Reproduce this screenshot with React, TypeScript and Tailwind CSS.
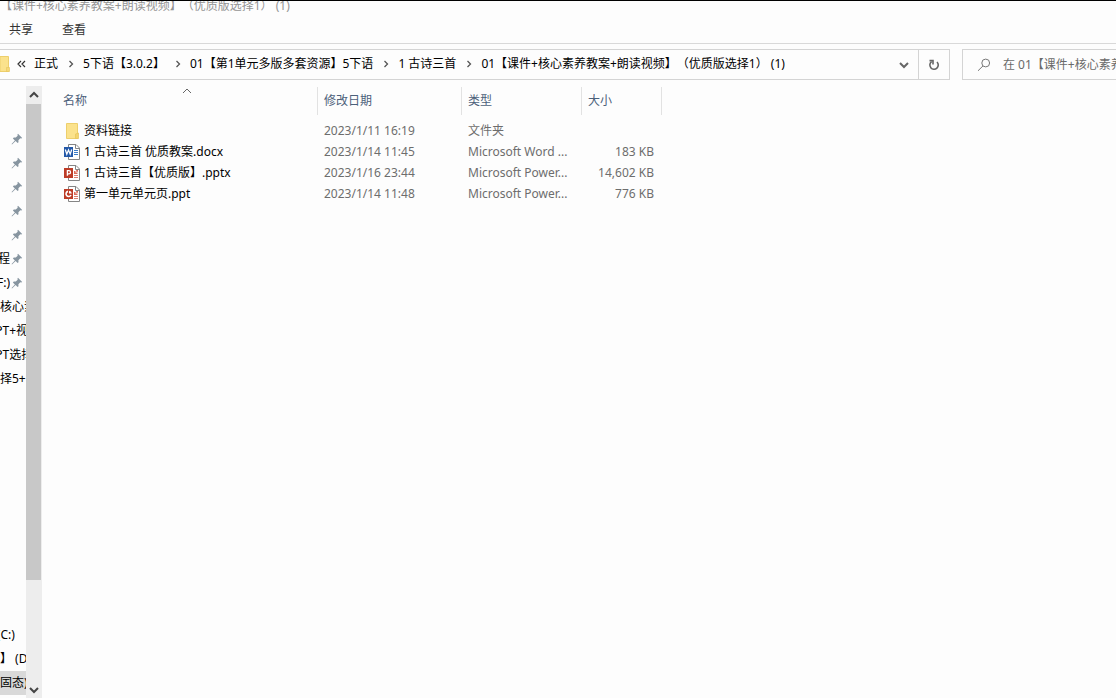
import type { ReactNode } from 'react';

type FileKind = 'folder' | 'word' | 'pptx' | 'ppt';

const crumbs = [
  '正式',
  '5下语【3.0.2】',
  '01【第1单元多版多套资源】5下语',
  '1 古诗三首',
  '01【课件+核心素养教案+朗读视频】（优质版选择1） (1)',
];

const files: { kind: FileKind; name: string; date: string; type: string; size: string }[] = [
  { kind: 'folder', name: '资料链接', date: '2023/1/11 16:19', type: '文件夹', size: '' },
  { kind: 'word', name: '1 古诗三首 优质教案.docx', date: '2023/1/14 11:45', type: 'Microsoft Word ...', size: '183 KB' },
  { kind: 'pptx', name: '1 古诗三首【优质版】.pptx', date: '2023/1/16 23:44', type: 'Microsoft Power...', size: '14,602 KB' },
  { kind: 'ppt', name: '第一单元单元页.ppt', date: '2023/1/14 11:48', type: 'Microsoft Power...', size: '776 KB' },
];

const pinned = ['', '', '', '', '', '方程', 'F:)'];
const recent = ['】核心素', 'PPT+视', 'PPT选择', '选择5+'];
const drives = ['s (C:)', '统】 (D:)', '新固态)'];

function Chevron({ dir, className }: { dir: 'up' | 'down' | 'right'; className: string }) {
  const d = { up: 'M1 6 L5 2 L9 6', down: 'M1 2 L5 6 L9 2', right: 'M3.5 1 L6.5 4 L3.5 7' }[dir];
  return (
    <svg viewBox="0 0 10 8" className={className} fill="none" stroke="currentColor" aria-hidden="true">
      <path d={d} />
    </svg>
  );
}

function Pin() {
  return (
    <svg viewBox="0 0 12 12" className="h-3 w-3 shrink-0 text-[#8795a0]" aria-hidden="true">
      <path fill="currentColor" d="M7 0.8 L11.2 5 L10.2 5.6 L9.3 5.3 L7.4 7.2 L7.5 9.2 L6.6 10.1 L4.6 8.1 L1 11.4 L0.6 11 L3.9 7.4 L1.9 5.4 L2.8 4.5 L4.8 4.6 L6.7 2.7 L6.4 1.8 Z" />
    </svg>
  );
}

function FolderIcon() {
  return (
    <svg viewBox="0 0 16 16" className="h-4 w-4 shrink-0" aria-hidden="true">
      <path d="M2.5 0.5 H13.5 V15.5 H2.5 Z" fill="#fbe28c" stroke="#edcf6c" />
      <path d="M11.5 11 L14.5 10 V15.5 H11.5 Z" fill="#f3d46d" stroke="#e6c45c" strokeWidth="0.7" />
    </svg>
  );
}

function DocumentIcon({ color, children }: { color: string; children: ReactNode }) {
  return (
    <svg viewBox="0 0 16 16" className="h-4 w-4 shrink-0" fill="none" aria-hidden="true">
      <path d="M4.5 0.5 H12 L15.5 4 V15.5 H4.5 Z" fill="#fff" stroke="#858585" />
      <path d="M11.5 0.5 V4.5 H15.5" stroke="#858585" />
      <rect x="0" y="3" width="9" height="10" fill={color} />
      {children}
    </svg>
  );
}

function FileIcon({ kind }: { kind: FileKind }) {
  if (kind === 'folder') return <FolderIcon />;
  if (kind === 'word')
    return (
      <DocumentIcon color="#2358a8">
        <path d="M1.3 5.5 L2.8 10.2 L4.5 6 L6.2 10.2 L7.7 5.5" stroke="#fff" strokeWidth="1.3" />
        <path d="M10 6.5 H14 M10 8.5 H14 M10 10.5 H14" stroke="#3c7cc8" />
      </DocumentIcon>
    );
  return (
    <DocumentIcon color="#bd3c27">
      <path d="M10 10.5 H14 M10 12.5 H14" stroke="#dc8070" />
      <path d="M10 9 V6 H11.5 V7.5 H13.5 V9 Z M12.2 5 H14 V6.8 H12.2 Z" fill="#dc6a58" />
      {kind === 'pptx' ? (
        <path d="M3.4 10.8 V5.7 H5 A1.5 1.5 0 0 1 5 8.8 H3.4" stroke="#fff" strokeWidth="1.3" />
      ) : (
        <>
          <path d="M4 5.4 A2.6 2.6 0 1 0 7 9" stroke="#fff" strokeWidth="1.6" />
          <path d="M5 4.8 V7.6 H7.8 A3 3 0 0 0 5 4.8 Z" fill="#fff" />
        </>
      )}
    </DocumentIcon>
  );
}

function AddressBar() {
  return (
    <div className="mt-[5px] flex h-[31px] gap-3">
      <nav aria-label="地址" className="flex min-w-0 flex-1 border-y border-r border-[#d4d4d4]">
        <div className="flex min-w-0 flex-1 items-center overflow-hidden pb-px whitespace-nowrap">
          <svg viewBox="0 0 10 16" className="h-4 w-[10px] shrink-0" aria-hidden="true">
            <path d="M0 0.5 H8.5 V15.5 H0 Z" fill="#fbe28c" stroke="#edcf6c" />
            <path d="M6.5 11.5 H9.5 V15.5 H6.5 Z" fill="#f6d978" stroke="#e6c45c" strokeWidth="0.6" />
          </svg>
          <button type="button" aria-label="上级文件夹" className="ml-[7px] mr-2">
            <svg viewBox="0 0 9 8" className="h-2 w-[9px]" fill="none" stroke="#333" strokeWidth="1.2" aria-hidden="true">
              <path d="M4 1 L1 4 L4 7 M8 1 L5 4 L8 7" />
            </svg>
          </button>
          {crumbs.map((crumb, i) => (
            <span key={crumb} className="flex items-center">
              {i > 0 && <Chevron dir="right" className="mr-[7px] ml-2 h-2 w-[10px] stroke-[1.3] text-[#555]" />}
              <a href="#" className="text-black">{crumb}</a>
            </span>
          ))}
        </div>
        <button type="button" aria-label="以前的位置" className="flex w-7 items-center justify-center text-[#666]">
          <Chevron dir="down" className="h-2 w-[10px] stroke-2" />
        </button>
        <button type="button" aria-label="刷新" className="flex w-[31px] items-center justify-center border-l border-[#d4d4d4]">
          <svg viewBox="0 0 12 12" className="h-3 w-3" fill="none" stroke="#666" strokeWidth="1.6" aria-hidden="true">
            <path d="M3.6 2.6 A4.2 4.2 0 1 0 9 3" />
            <path d="M1.5 1.6 H5 V5.4" />
          </svg>
        </button>
      </nav>
      <label className="flex w-[154px] items-center overflow-hidden border-y border-l border-[#d4d4d4] pl-[14px]">
        <svg viewBox="0 0 14 14" className="mr-3 h-[14px] w-[14px] shrink-0" fill="none" stroke="#777" aria-label="搜索">
          <circle cx="8.7" cy="5" r="3.9" />
          <path d="M6 7.9 L1 12.8" />
        </svg>
        <input
          type="text"
          placeholder="在 01【课件+核心素养教案"
          className="w-full min-w-0 bg-transparent outline-none placeholder:text-[#6a6a6a]"
        />
      </label>
    </div>
  );
}

function Sidebar() {
  return (
    <aside className="flex w-[26px] shrink-0 flex-col overflow-hidden pb-[3px] pt-[47px] whitespace-nowrap text-black">
      <ul>
        {pinned.map((label, i) => (
          <li key={i} className="flex h-6 items-center gap-px">
            <span className="flex w-[10px] justify-end overflow-hidden">{label}</span>
            <Pin />
          </li>
        ))}
      </ul>
      <ul className="-ml-3">
        {recent.map((label) => (
          <li key={label} className="h-6 leading-6">{label}</li>
        ))}
      </ul>
      <ul className="-ml-3 mt-auto">
        {drives.map((label) => (
          <li key={label} className="h-6 leading-6 last:bg-[#d9d9d9]">{label}</li>
        ))}
      </ul>
    </aside>
  );
}

function ScrollBar() {
  return (
    <div className="mt-[6px] flex w-4 shrink-0 flex-col bg-[#ededed] text-[#444]">
      <button type="button" aria-label="向上滚动" className="flex h-[18px] items-center justify-center">
        <Chevron dir="up" className="h-2 w-[10px] stroke-2" />
      </button>
      <div className="flex flex-1 flex-col pr-px">
        <div className="flex-14 bg-[#c8c8c8]" />
        <div className="flex-3" />
      </div>
      <button type="button" aria-label="向下滚动" className="flex h-4 items-center justify-center">
        <Chevron dir="down" className="h-2 w-[10px] stroke-2" />
      </button>
    </div>
  );
}

function FileTable() {
  const head = 'h-7 border-r border-[#e2e2e2] pl-[6px] text-left font-normal';
  return (
    <main className="min-w-0 flex-1 overflow-hidden pl-[15px] pt-[7px]">
      <table className="w-[605px] table-fixed border-separate border-spacing-0 whitespace-nowrap text-[#6d6d6d]">
        <colgroup>
          <col className="w-[261px]" />
          <col className="w-[144px]" />
          <col className="w-[120px]" />
          <col className="w-[80px]" />
        </colgroup>
        <thead className="text-[#4c607a]">
          <tr>
            <th className={`${head} relative`}>
              名称
              <Chevron dir="up" className="absolute left-1/2 top-0 h-2 w-[10px] -translate-x-1/2 text-[#666]" />
            </th>
            <th className={head}>修改日期</th>
            <th className={head}>类型</th>
            <th className={head}>大小</th>
          </tr>
          <tr aria-hidden="true"><td className="h-[5px] p-0" /></tr>
        </thead>
        <tbody>
          {files.map((file) => (
            <tr key={file.name} className="h-[21px]">
              <td className="p-0 pl-[7px]">
                <a href="#" className="flex items-center gap-1 text-black">
                  <FileIcon kind={file.kind} />
                  {file.name}
                </a>
              </td>
              <td className="p-0 pl-[6px]">{file.date}</td>
              <td className="p-0 pl-[6px]">{file.type}</td>
              <td className="p-0 pr-2 text-right">{file.size}</td>
            </tr>
          ))}
        </tbody>
      </table>
    </main>
  );
}

export default function App() {
  return (
    <div className="flex h-screen flex-col overflow-hidden border-t border-black bg-[#fdfdfd] font-['Noto_Sans','Noto_Sans_CJK_SC',sans-serif] text-[12px] leading-4 [text-spacing-trim:space-all]">
      <header className="flex h-4 items-end overflow-hidden pb-[3px] whitespace-nowrap text-[#949494]">
        <h1>【课件+核心素养教案+朗读视频】（优质版选择1） (1)</h1>
      </header>
      <div className="flex h-[27px] items-center gap-[29px] border-b border-[#d9d9d9] pl-[9px] text-[#333]">
        <button type="button">共享</button>
        <button type="button">查看</button>
      </div>
      <AddressBar />
      <div className="flex min-h-0 flex-1">
        <Sidebar />
        <ScrollBar />
        <FileTable />
      </div>
    </div>
  );
}
